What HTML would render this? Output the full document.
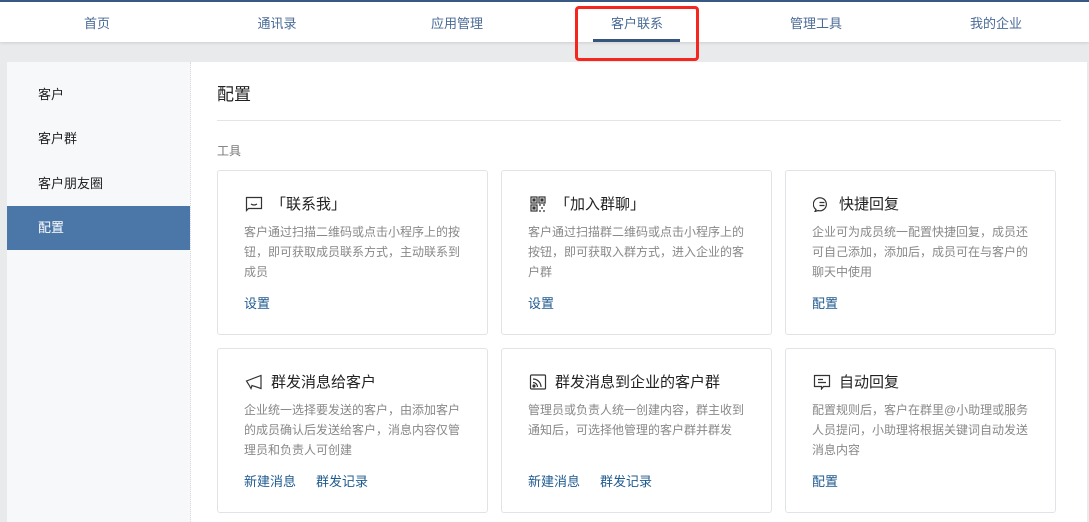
<!DOCTYPE html>
<html><head><meta charset="utf-8"><style>
*{margin:0;padding:0;box-sizing:border-box}
body{width:1089px;height:516px;overflow:hidden;background:#e9eaec;font-family:"Liberation Sans","Noto Sans CJK SC",sans-serif;position:relative}
.top{position:absolute;left:0;top:0;width:1089px;height:2px;background:#3a5a85}
.nav{position:absolute;left:0;top:2px;width:1089px;height:40px;background:#fff;box-shadow:0 1px 3px rgba(0,0,0,.12)}
.nav span{position:absolute;top:11px;font-size:13px;color:#4a6a96;transform:translateX(-50%);white-space:nowrap}
.uline{position:absolute;left:593px;top:37px;width:87px;height:3px;background:#35557e}
.red{position:absolute;left:575px;top:6px;width:124px;height:55px;border:3px solid #f4261e;border-radius:4px}
.panel{position:absolute;left:7px;top:62px;width:1080px;height:460px;background:#fff}
.side{position:absolute;left:7px;top:62px;width:184px;height:460px;background:#f7f8fa;border-right:1px dotted #d8d9dc}
.side div{position:absolute;left:0;width:183px;height:44px;line-height:44px;padding-left:31px;font-size:13px;color:#222}
.side .act{background:#4a76a8;color:#fff}
h1{position:absolute;left:217px;top:80px;font-size:17px;font-weight:normal;color:#222}
.hr{position:absolute;left:217px;top:120px;width:844px;height:1px;background:#e3e4e6}
.tool{position:absolute;left:217px;top:142px;font-size:12px;color:#777}
.card{position:absolute;width:271px;height:165px;border:1px solid #e2e3e6;border-radius:3px;background:#fff}
.card .t{position:absolute;left:27px;top:22px;font-size:15px;color:#222;display:flex;align-items:center;white-space:nowrap}
.card .t svg{margin-right:8px}
.card .d{position:absolute;left:26px;top:51px;width:218px;font-size:12px;line-height:20px;color:#888}
.card .l{position:absolute;left:26px;top:122px;font-size:13px;color:#1f5a8f;white-space:nowrap}
.card .l span{margin-right:20px}
</style></head><body>
<div class="top"></div>
<div class="nav">
<span style="left:97px">首页</span><span style="left:277px">通讯录</span><span style="left:457px">应用管理</span><span style="left:637px">客户联系</span><span style="left:816px">管理工具</span><span style="left:996px">我的企业</span>
<div class="uline"></div>
</div>
<div class="panel"></div>
<div class="side">
<div style="top:11px">客户</div><div style="top:55px">客户群</div><div style="top:100px">客户朋友圈</div><div class="act" style="top:144px">配置</div>
</div>
<div class="red"></div>
<h1>配置</h1>
<div class="hr"></div>
<div class="tool">工具</div>

<div class="card" style="left:217px;top:170px">
<div class="t"><svg width="18" height="16" viewBox="0 0 18 16" fill="none" stroke="#333" stroke-width="1.2"><path d="M1.5 1.5h15v11h-13l-2 2z"/><path d="M6 8q3 2 6 0"/></svg>「联系我」</div>
<div class="d">客户通过扫描二维码或点击小程序上的按钮，即可获取成员联系方式，主动联系到成员</div>
<div class="l"><span>设置</span></div></div>

<div class="card" style="left:501px;top:170px">
<div class="t"><svg width="18" height="16" viewBox="0 0 18 16" fill="none" stroke="#333" stroke-width="1.2"><rect x="2" y="1" width="6" height="6"/><rect x="10" y="1" width="6" height="6"/><rect x="2" y="9" width="6" height="6"/><rect x="4" y="3" width="2" height="2" fill="#333"/><rect x="12" y="3" width="2" height="2" fill="#333"/><rect x="4" y="11" width="2" height="2" fill="#333"/><path d="M10 9h2M14 9h2M12 12h2M10 15h2M14 15h2"/></svg>「加入群聊」</div>
<div class="d">客户通过扫描群二维码或点击小程序上的按钮，即可获取入群方式，进入企业的客户群</div>
<div class="l"><span>设置</span></div></div>

<div class="card" style="left:785px;top:170px">
<div class="t"><svg width="18" height="16" viewBox="0 0 18 16" fill="none" stroke="#333" stroke-width="1.2"><path d="M3 13.5A6.5 6.5 0 1 1 5 14.5l-3 1z"/><path d="M6.5 6.5h5M6.5 9.5h5"/></svg>快捷回复</div>
<div class="d">企业可为成员统一配置快捷回复，成员还可自己添加，添加后，成员可在与客户的聊天中使用</div>
<div class="l"><span>配置</span></div></div>

<div class="card" style="left:217px;top:348px">
<div class="t"><svg width="18" height="16" viewBox="0 0 18 16" fill="none" stroke="#333" stroke-width="1.2"><path d="M1.5 7L16 1.5v13L7 11.5l-1 3-2-3.5z"/></svg>群发消息给客户</div>
<div class="d">企业统一选择要发送的客户，由添加客户的成员确认后发送给客户，消息内容仅管理员和负责人可创建</div>
<div class="l"><span>新建消息</span><span>群发记录</span></div></div>

<div class="card" style="left:501px;top:348px">
<div class="t"><svg width="18" height="16" viewBox="0 0 18 16" fill="none" stroke="#333" stroke-width="1.2"><rect x="1.5" y="1" width="15" height="14" rx="1"/><path d="M4 5a8 8 0 0 1 8 8M4 8.5a4.5 4.5 0 0 1 4.5 4.5"/><circle cx="5" cy="12" r="1" fill="#333"/></svg>群发消息到企业的客户群</div>
<div class="d">管理员或负责人统一创建内容，群主收到通知后，可选择他管理的客户群并群发</div>
<div class="l"><span>新建消息</span><span>群发记录</span></div></div>

<div class="card" style="left:785px;top:348px">
<div class="t"><svg width="18" height="16" viewBox="0 0 18 16" fill="none" stroke="#333" stroke-width="1.2"><path d="M1.5 1.5h15v11h-6l-2 2.5v-2.5h-7z"/><path d="M5 5.5h5M5 8.5h8"/></svg>自动回复</div>
<div class="d">配置规则后，客户在群里@小助理或服务人员提问，小助理将根据关键词自动发送消息内容</div>
<div class="l"><span>配置</span></div></div>
</body></html>
